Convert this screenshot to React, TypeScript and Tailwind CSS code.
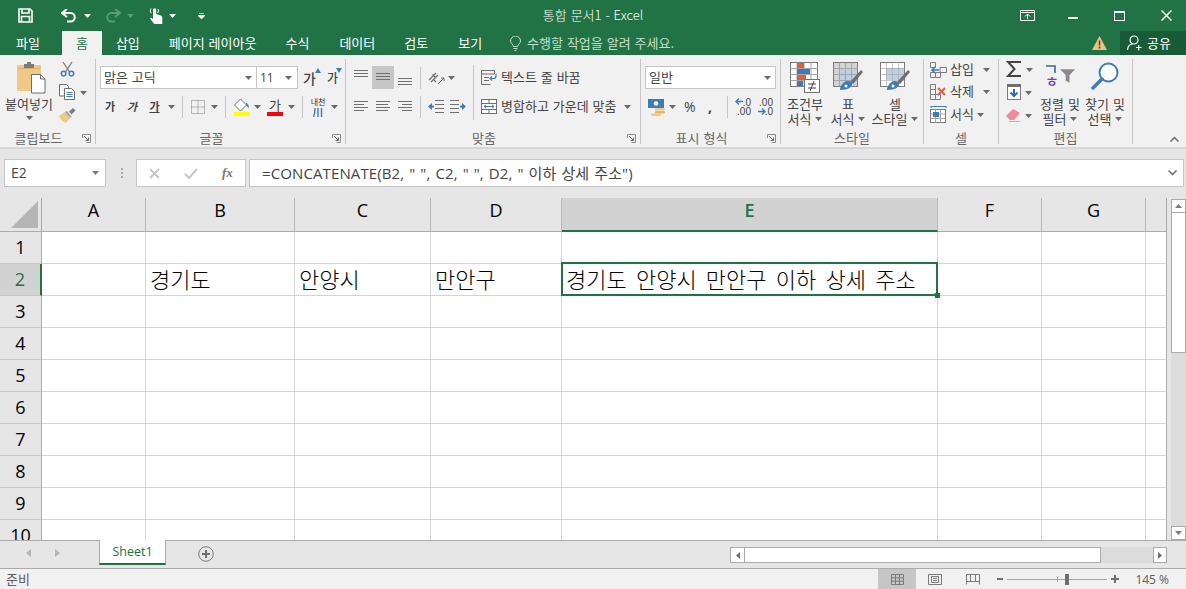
import type { ReactNode } from 'react';

const cols = [
  { label: 'A', w: 'w-[104px]' },
  { label: 'B', w: 'w-[149px]' },
  { label: 'C', w: 'w-[136px]' },
  { label: 'D', w: 'w-[131px]' },
  { label: 'E', w: 'w-[376px]' },
  { label: 'F', w: 'w-[104px]' },
  { label: 'G', w: 'w-[104px]' },
];

const rowNumbers = [1, 2, 3, 4, 5, 6, 7, 8, 9, 10];

const tabs = [
  { label: '파일', cls: 'ml-[2px]' },
  { label: '홈', cls: 'ml-[8px] bg-[#f1f1f1] !text-[#217346]' },
  { label: '삽입', cls: '' },
  { label: '페이지 레이아웃', cls: 'ml-[1px]' },
  { label: '수식', cls: 'ml-[1px]' },
  { label: '데이터', cls: 'ml-[2px]' },
  { label: '검토', cls: 'ml-[1px]' },
  { label: '보기', cls: 'ml-[2px]' },
];

const cellText: Record<string, string> = {
  B2: '경기도',
  C2: '안양시',
  D2: '만안구',
  E2: '경기도 안양시 만안구 이하 상세 주소',
};

function Caret({ className = '', color = '#6a6a6a' }: { className?: string; color?: string }) {
  return (
    <svg width="7" height="4" viewBox="0 0 7 4" className={`shrink-0 ${className}`}>
      <path d="M0 0h7L3.5 4z" fill={color} />
    </svg>
  );
}

function Launcher() {
  return (
    <svg width="9" height="9" viewBox="0 0 9 9">
      <path d="M.5 4V.5H8.5V8.5H4.5" fill="none" stroke="#8a8a8a" />
      <path d="M2 2l4.5 4.5M6.5 3.5v3h-3" fill="none" stroke="#6a6a6a" />
    </svg>
  );
}

function Group({ width, label, launcher, children }: { width: string; label: string; launcher?: boolean; children: ReactNode }) {
  return (
    <section className={`${width} h-[85px] mt-[4px] shrink-0 flex flex-col border-r border-[#c6c6c6]`}>
      <div className="h-[71px]">{children}</div>
      <div className="h-[14px] flex items-center text-[#666666] leading-[14px]">
        <span className="flex-1 text-center pt-[2px]">{label}</span>
        {launcher && (
          <span className="w-[18px] pl-[5px] pt-[3px]">
            <Launcher />
          </span>
        )}
      </div>
    </section>
  );
}

function Sep({ className = '' }: { className?: string }) {
  return <div className={`w-px h-[22px] bg-[#c6c6c6] shrink-0 ${className}`} />;
}

function HLines({ lines }: { lines: [number, number][] }) {
  return (
    <svg width="14" height="23" viewBox="0 0 14 23" className="mx-auto">
      {lines.map(([y, x2], i) => (
        <path key={i} d={`M${x2 < 0 ? 14 + x2 : 0} ${y + 0.5}H${x2 < 0 ? 14 : x2}`} stroke="#6f6f6f" />
      ))}
    </svg>
  );
}

function BigButton({ width, icon, top, bottom }: { width: string; icon: ReactNode; top: string; bottom: string }) {
  return (
    <div className={`${width} flex flex-col items-center pt-[3px]`}>
      <div className="h-[34px] flex items-start justify-center">{icon}</div>
      <div className="leading-[15px] whitespace-nowrap">{top}</div>
      <div className="leading-[15px] flex items-center gap-[4px] whitespace-nowrap">
        {bottom}
        <Caret />
      </div>
    </div>
  );
}

function SmallRow({ height, icon, label, caretCls }: { height: string; icon: ReactNode; label: string; caretCls: string }) {
  return (
    <div className={`${height} flex items-center pl-[6px]`}>
      {icon}
      <span className="ml-[3px]">{label}</span>
      <Caret className={caretCls} />
    </div>
  );
}

function SaveIcon() {
  return (
    <svg width="15" height="15" viewBox="0 0 15 15">
      <path d="M1 1h11l2 2v11H1z" fill="none" stroke="#fff" strokeWidth="1.6" />
      <path d="M4 1v4h7V1M3.5 14V8.5h8V14" fill="none" stroke="#fff" strokeWidth="1.6" />
    </svg>
  );
}

function UndoIcon({ color = '#fff' }: { color?: string }) {
  return (
    <svg width="15" height="14" viewBox="0 0 15 14">
      <path d="M2 4h7.5a4 4 0 0 1 0 8.5H6" fill="none" stroke={color} strokeWidth="2" />
      <path d="M6 0L1 4l5 4" fill="none" stroke={color} strokeWidth="2" />
    </svg>
  );
}

function UndoIconFlipped() {
  return (
    <div className="-scale-x-100">
      <UndoIcon color="#5d9a78" />
    </div>
  );
}

function TouchIcon() {
  return (
    <svg width="14" height="18" viewBox="0 0 14 18">
      <path d="M4 7.5V2.8a1.6 1.6 0 0 1 3.2 0V7l4.5 1.4c1 .3 1.6 1.1 1.6 2.1V17H5.2L1 11.500l1-1 2 1.500z" fill="#fff" />
      <path d="M2.3 6.3A3.8 3.8 0 0 1 2 1.5M8.7 6a3.8 3.8 0 0 0 .3-4" fill="none" stroke="#fff" />
    </svg>
  );
}

function PasteIcon() {
  return (
    <svg width="29" height="32" viewBox="0 0 29 32">
      <rect x="0" y="3" width="24" height="26" rx="1" fill="#f0c987" />
      <rect x="7" y="2" width="10" height="4" fill="#7b7b7b" />
      <rect x="10" y="0" width="4" height="3" fill="#7b7b7b" />
      <rect x="1" y="6" width="22" height="1" fill="#d8b36e" />
      <path d="M14.5 12.5h9l4.500 4.500v14H14.500z" fill="#fff" stroke="#6f6f6f" />
      <path d="M23.500 12.500V17H28" fill="none" stroke="#6f6f6f" />
    </svg>
  );
}

function ScissorsIcon() {
  return (
    <svg width="15" height="16" viewBox="0 0 15 16">
      <path d="M3 1l6.500 10M12 1L5.500 11" fill="none" stroke="#7b7b7b" strokeWidth="1.300" />
      <circle cx="3.600" cy="12.600" r="2.300" fill="none" stroke="#3f7cb5" strokeWidth="1.500" />
      <circle cx="11.400" cy="12.600" r="2.300" fill="none" stroke="#3f7cb5" strokeWidth="1.500" />
    </svg>
  );
}

function CopyIcon() {
  return (
    <svg width="16" height="16" viewBox="0 0 16 16">
      <path d="M.5.5h7l2 2V4M.5.5V12H5" fill="#fff" stroke="#6f6f6f" />
      <path d="M5.500 4.500h7l3 3v8h-10z" fill="#fff" stroke="#6f6f6f" />
      <path d="M7.500 8.500h6M7.500 10.500h6M7.500 12.500h6" stroke="#3f7cb5" />
    </svg>
  );
}

function BrushIcon() {
  return (
    <svg width="17" height="15" viewBox="0 0 17 15">
      <path d="M0 8l6-4 5 6-4 5C4 14 1 11 0 8z" fill="#f0c987" />
      <path d="M6 4l5 6 1.500-1.500L8 3z" fill="#a4a4a4" />
      <path d="M10 3.500l4-3.500 2.500 2.500-4 4z" fill="#7b7b7b" />
    </svg>
  );
}

function BorderIcon() {
  return (
    <svg width="14" height="14" viewBox="0 0 14 14">
      <path d="M.5.5h13v13H.5zM7 .5v13M.5 7h13" fill="none" stroke="#7b7b7b" strokeDasharray="1 1" />
    </svg>
  );
}

function FillIcon() {
  return (
    <svg width="17" height="18" viewBox="0 0 17 18">
      <path d="M1.500 7l6-6 6 6-6 6z" fill="#fff" stroke="#6f6f6f" />
      <path d="M13 4.500c2 1 3 3 3 5.500l-2.500-2z" fill="#3f7cb5" />
      <rect x="1" y="14" width="16" height="4" fill="#ffff00" />
    </svg>
  );
}

function PhoneticIcon() {
  return (
    <div className="w-[16px] flex flex-col items-center leading-none">
      <span className="text-[8px] leading-[10px] text-[#333] whitespace-nowrap">내천</span>
      <svg width="10" height="9" viewBox="0 0 10 9" className="mt-[1px]">
        <path d="M2 0C2 4 2 6 .5 9M5 0v9M8.500 0v9" fill="none" stroke="#3f7cb5" strokeWidth="1.400" />
      </svg>
    </div>
  );
}

function OrientIcon() {
  return (
    <svg width="18" height="16" viewBox="0 0 18 16">
      <path d="M1 10l7-7M3 12l7-7M5 9l3 3M4.500 4.500l3 3" fill="none" stroke="#6f6f6f" strokeWidth="1.200" />
      <path d="M10 14L16 8M16 8h-3M16 8v3" fill="none" stroke="#6f6f6f" />
    </svg>
  );
}

function IndentIcon({ flip }: { flip?: boolean }) {
  return (
    <svg width="16" height="13" viewBox="0 0 16 13" className={flip ? '-scale-x-100' : ''}>
      <path d="M7 .5h9M7 4.500h9M7 8.500h9M7 12.500h9" stroke="#6f6f6f" />
      <path d="M0 6.500L4 3v2.500h2v2H4V10z" fill="#3f7cb5" />
    </svg>
  );
}

function WrapIcon() {
  return (
    <svg width="16" height="15" viewBox="0 0 16 15">
      <path d="M.5.5h13v3.500H.5zM.5 4v10.500h9" fill="none" stroke="#6f6f6f" />
      <path d="M3 7.500h5M3 10.500h5" stroke="#6f6f6f" />
      <path d="M15 3.500v2.500a2.500 2.500 0 0 1-2.500 2.500H9M11 6.500l-2 2 2 2" fill="none" stroke="#3f7cb5" strokeWidth="1.200" />
    </svg>
  );
}

function MergeIcon() {
  return (
    <svg width="16" height="15" viewBox="0 0 16 15">
      <rect x=".5" y=".5" width="15" height="14" fill="#fff" stroke="#6f6f6f" />
      <path d="M.5 4.500h15M.5 10.500h15M8 .5v4M8 10.500v4" stroke="#6f6f6f" />
      <path d="M3 7.500h10M5 5.800l-2 1.700 2 1.700M11 5.800l2 1.700-2 1.700" fill="none" stroke="#3f7cb5" />
    </svg>
  );
}

function CurrencyIcon() {
  return (
    <svg width="17" height="17" viewBox="0 0 17 17">
      <rect x="0" y="0" width="16" height="9" fill="#3f7cb5" />
      <circle cx="8" cy="4.500" r="2.300" fill="#fff" />
      <rect x="7" y="9" width="10" height="2.500" rx="1" fill="#f0c987" />
      <rect x="7" y="12" width="10" height="2.500" rx="1" fill="#e8b566" />
      <rect x="3" y="14.500" width="10" height="2.500" rx="1" fill="#f0c987" />
    </svg>
  );
}

function DecimalIcon({ top, bottom, dir }: { top: string; bottom: string; dir: 'left' | 'right' }) {
  return (
    <div className="w-[16px] relative text-[10px] leading-[9px] text-[#444] text-right font-['Liberation_Sans',sans-serif]">
      <div>{top}</div>
      <div>{bottom}</div>
      <svg width="8" height="7" viewBox="0 0 8 7" className={`absolute ${dir === 'left' ? 'left-0 top-0' : 'left-[1px] top-[10px]'}`}>
        {dir === 'left' ? (
          <path d="M8 3.500H1M4 .5l-3 3 3 3" fill="none" stroke="#3f7cb5" strokeWidth="1.400" />
        ) : (
          <path d="M0 3.500h7M4 .5l3 3-3 3" fill="none" stroke="#3f7cb5" strokeWidth="1.400" />
        )}
      </svg>
    </div>
  );
}

function CondFormatIcon() {
  return (
    <svg width="30" height="31" viewBox="0 0 30 31">
      <rect x=".5" y=".5" width="27" height="24" fill="#fff" stroke="#7b7b7b" />
      <path d="M7 .5v24M14 .5v24M21 .5v24M.5 6.500h27M.5 12.500h27M.5 18.500h27" stroke="#a4a4a4" />
      <rect x="7" y="1" width="7" height="5" fill="#e0603f" />
      <rect x="7" y="7" width="13" height="5" fill="#3f7cb5" />
      <rect x="7" y="13" width="9" height="5" fill="#e0603f" />
      <rect x="7" y="19" width="6" height="5" fill="#3f7cb5" />
      <rect x="14.500" y="17.500" width="15" height="13" fill="#fff" stroke="#6f6f6f" />
      <path d="M18 22h8M18 26h8M20 29l4-10" stroke="#444" />
    </svg>
  );
}

function TableBrushIcon({ header }: { header?: boolean }) {
  return (
    <svg width="30" height="30" viewBox="0 0 30 30">
      <rect x=".5" y=".5" width="24" height="24" fill={header ? '#fff' : '#d4d4d4'} stroke="#7b7b7b" />
      <rect x={header ? 6 : 7} y={header ? 6 : 7} width={header ? 18 : 17} height={header ? 12 : 17} fill="#bcd1e6" />
      <path d="M6.500 .5v24M12.500 .5v24M18.500 .5v24M.5 6.500h24M.5 12.500h24M.5 18.500h24" stroke="#a4a4a4" strokeWidth={header ? 0.6 : 1} />
      <path d="M17 20L28 8l2 2-10 12z" fill="#6f6f6f" />
      <path d="M7 28c0-4 3-8 7-9 3-.5 5 1 5 3 0 3-4 6-12 6z" fill="#3f7cb5" />
      <circle cx="13" cy="24" r="1.500" fill="#fff" />
    </svg>
  );
}

function InsertCellIcon() {
  return (
    <svg width="17" height="16" viewBox="0 0 17 16">
      <path d="M.5.5h5v5h-5zM.5 10.500h5v5h-5zM5.500 10.500h5v5h-5zM10 5.500h6.500v5H10z" fill="none" stroke="#7b7b7b" />
      <path d="M9 8H2M5 5L2 8l3 3" fill="none" stroke="#3f7cb5" strokeWidth="1.600" />
    </svg>
  );
}

function DeleteCellIcon() {
  return (
    <svg width="17" height="16" viewBox="0 0 17 16">
      <path d="M.5.5h5v5h-5zM.5 10.500h5v5h-5zM5.500 10.500h5v5h-5zM.5 5.500h5v5h-5z" fill="none" stroke="#7b7b7b" />
      <path d="M8 4l7 7M15 4l-7 7" stroke="#e0603f" strokeWidth="2" />
    </svg>
  );
}

function FormatCellIcon() {
  return (
    <svg width="17" height="17" viewBox="0 0 17 17">
      <path d="M1 .5h15M1 0v2M16 0v2" stroke="#3f7cb5" />
      <rect x=".5" y="3.500" width="15" height="13" fill="#fff" stroke="#7b7b7b" />
      <path d="M5.500 3.500v13M10.500 3.500v13M.5 8h15M.5 12.500h15" stroke="#a4a4a4" />
      <rect x="3" y="6" width="6" height="5" fill="#3f7cb5" />
    </svg>
  );
}

function SigmaIcon() {
  return (
    <svg width="16" height="16" viewBox="0 0 16 16">
      <path d="M15 1H2l6.500 7L2 15h13" fill="none" stroke="#444" strokeWidth="2" />
    </svg>
  );
}

function FillDownIcon() {
  return (
    <svg width="14" height="16" viewBox="0 0 14 16">
      <rect x=".5" y=".5" width="13" height="15" fill="#fff" stroke="#7b7b7b" />
      <rect x="0" y="0" width="14" height="3" fill="#6f6f6f" />
      <path d="M7 5v7M3.500 8.500L7 12l3.500-3.500" fill="none" stroke="#2f6ea8" strokeWidth="2" />
    </svg>
  );
}

function EraserIcon() {
  return (
    <svg width="15" height="14" viewBox="0 0 15 14">
      <path d="M0 8l7-7 7 4-6 7H4z" fill="#ee8a96" />
      <path d="M3 14h11" stroke="#7b7b7b" />
    </svg>
  );
}

function SortFilterIcon() {
  return (
    <div className="w-[30px] h-[24px] mt-[3px] flex items-start">
      <div className="w-[14px] text-[#7a3fa5] text-[15px] font-medium leading-[14px] flex flex-col items-center">
        <svg width="11" height="8" viewBox="0 0 11 8">
          <path d="M0 1h9v7" fill="none" stroke="#2f6ea8" strokeWidth="1.600" />
        </svg>
        <span className="mt-[1px]">ㅎ</span>
      </div>
      <svg width="16" height="14" viewBox="0 0 16 14" className="mt-[4px] ml-[1px]">
        <path d="M0 0h16L10 6v8l-4-2V6z" fill="#8a8a8a" />
      </svg>
    </div>
  );
}

function SearchIcon() {
  return (
    <svg width="28" height="28" viewBox="0 0 28 28">
      <circle cx="17.500" cy="10.500" r="9" fill="#fff" stroke="#3f7cb5" strokeWidth="2" />
      <path d="M11 17L2 26" stroke="#3f7cb5" strokeWidth="3.500" strokeLinecap="round" />
    </svg>
  );
}

function TitleBar() {
  return (
    <header className="h-[31px] grid grid-cols-[1fr_auto_1fr] items-center text-white">
      <div className="flex items-center">
        <div className="ml-[18px]"><SaveIcon /></div>
        <div className="ml-[28px]"><UndoIcon /></div>
        <Caret className="ml-[8px]" color="#fff" />
        <div className="ml-[15px]"><UndoIconFlipped /></div>
        <Caret className="ml-[6px]" color="#5d9a78" />
        <div className="ml-[15px]"><TouchIcon /></div>
        <Caret className="ml-[6px]" color="#fff" />
        <svg width="7" height="6" viewBox="0 0 7 6" className="ml-[22px]">
          <path d="M1 .5h5M0 2.500h7L3.500 6z" fill="#fff" stroke="#fff" strokeWidth=".6" />
        </svg>
      </div>
      <div className="text-[13px] font-light">통합 문서1 - Excel</div>
      <div className="flex items-center justify-end">
        <svg width="15" height="11" viewBox="0 0 15 11">
          <path d="M.5.5h14v10H.500zM.5 2.500h14" fill="none" stroke="#fff" />
          <path d="M7.500 9V4.500M5 6.500l2.500-2.500L10 6.500" fill="none" stroke="#fff" />
        </svg>
        <div className="w-[10px] h-[2px] bg-white ml-[33px] mt-[4px]" />
        <div className="w-[11px] h-[10px] border border-white border-t-2 ml-[36px]" />
        <svg width="11" height="11" viewBox="0 0 11 11" className="ml-[36px] mr-[14px]">
          <path d="M.5.500l10 10M10.500.500l-10 10" stroke="#fff" strokeWidth="1.500" />
        </svg>
      </div>
    </header>
  );
}

function TabBar() {
  return (
    <nav className="h-[24px] flex items-stretch text-white">
      {tabs.map((t) => (
        <div key={t.label} className={`px-[14px] leading-[24px] whitespace-nowrap ${t.cls}`}>
          {t.label}
        </div>
      ))}
      <div className="ml-[14px] flex items-center text-[#c4dfce]">
        <svg width="11" height="15" viewBox="0 0 11 15">
          <path d="M3.500 10.500C3 8 .5 7.500.5 5a5 5 0 0 1 10 0c0 2.500-2.500 3-3 5.500z" fill="none" stroke="#c4dfce" />
          <path d="M3.500 12.500h4M4.500 14.500h2" stroke="#c4dfce" />
        </svg>
        <span className="ml-[6px]">수행할 작업을 알려 주세요.</span>
      </div>
      <div className="ml-auto flex items-center">
        <svg width="15" height="14" viewBox="0 0 15 14">
          <path d="M7.500 0L15 14H0z" fill="#eec27d" />
          <path d="M7.500 4.500v5M7.500 10.500v2" stroke="#444" strokeWidth="1.500" />
        </svg>
        <div className="ml-[13px] w-[66px] h-full bg-[#185c37] flex items-center pl-[7px]">
          <svg width="15" height="16" viewBox="0 0 15 16">
            <circle cx="7" cy="5" r="4" fill="none" stroke="#fff" strokeWidth="1.200" />
            <path d="M.5 15c.3-3.500 2.500-6 5.500-6.500M9 12.500h5.500M11.700 10v5.500" fill="none" stroke="#fff" strokeWidth="1.200" />
          </svg>
          <span className="ml-[5px]">공유</span>
        </div>
      </div>
    </nav>
  );
}

function Ribbon() {
  return (
    <div className="h-[94px] bg-[#f1f1f1] border-b-2 border-[#d6d6d6] flex text-[#444444] shrink-0">
      <Group width="w-[96px]" label="클립보드" launcher>
        <div className="flex">
          <div className="w-[58px] flex flex-col items-center pt-[3px]">
            <div className="h-[34px] ml-[4px]"><PasteIcon /></div>
            <div className="leading-[15px]">붙여넣기</div>
            <Caret className="mt-[5px]" />
          </div>
          <div className="flex flex-col pt-[2px]">
            <div className="ml-[2px] h-[23px]"><ScissorsIcon /></div>
            <div className="ml-[1px] h-[24px] flex items-start">
              <CopyIcon />
              <Caret className="ml-[5px] mt-[7px]" />
            </div>
            <div className="ml-[1px]"><BrushIcon /></div>
          </div>
        </div>
      </Group>

      <Group width="w-[250px]" label="글꼴" launcher>
        <div className="flex items-center pl-[4px] pt-[7px]">
          <div className="w-[198px] h-[23px] bg-white border border-[#c6c6c6] flex">
            <div className="w-[156px] border-r border-[#c6c6c6] flex items-center justify-between pl-[3px] pr-[4px]">
              <span>맑은 고딕</span>
              <Caret />
            </div>
            <div className="flex-1 flex items-center justify-between pl-[3px] pr-[5px]">
              <span className="font-['Open_Sans',sans-serif] text-[12px]">11</span>
              <Caret />
            </div>
          </div>
          <div className="ml-[5px] w-[16px] relative text-[14px] leading-none font-medium">
            가
            <svg width="6" height="5" viewBox="0 0 6 5" className="absolute -right-[2px] -top-[3px]"><path d="M3 0l3 5H0z" fill="#3f7cb5" /></svg>
          </div>
          <div className="ml-[8px] w-[14px] relative text-[12px] leading-none font-medium">
            가
            <svg width="6" height="5" viewBox="0 0 6 5" className="absolute -right-[1px] -top-[4px]"><path d="M0 0h6L3 5z" fill="#3f7cb5" /></svg>
          </div>
        </div>
        <div className="h-[24px] mt-[6px] flex items-center pl-[3px]">
          <span className="w-[22px] text-center text-[11px] font-bold">가</span>
          <span className="w-[22px] text-center text-[11px] font-bold italic">가</span>
          <span className="w-[23px] text-center text-[11px] font-bold underline">가</span>
          <Caret className="ml-[2px]" />
          <Sep className="ml-[7px]" />
          <div className="ml-[8px]"><BorderIcon /></div>
          <Caret className="ml-[6px]" />
          <Sep className="ml-[7px]" />
          <div className="ml-[7px]"><FillIcon /></div>
          <Caret className="ml-[4px]" />
          <div className="ml-[6px] w-[16px] flex flex-col items-center">
            <span className="text-[13px] leading-[14px]">가</span>
            <div className="w-[16px] h-[4px] bg-[#ff0000]" />
          </div>
          <Caret className="ml-[5px]" />
          <Sep className="ml-[7px]" />
          <div className="ml-[7px]"><PhoneticIcon /></div>
          <Caret className="ml-[5px]" />
        </div>
      </Group>

      <Group width="w-[295px]" label="맞춤" launcher>
        <div className="flex pt-[6px]">
          <div className="w-[127px]">
            <div className="h-[23px] flex items-center pl-[4px] mt-[1px]">
              <div className="w-[22px]"><HLines lines={[[4, 14], [7, 14], [10, 14]]} /></div>
              <div className="w-[22px] bg-[#c6c6c6]"><HLines lines={[[7, 14], [10, 14], [13, 14]]} /></div>
              <div className="w-[22px]"><HLines lines={[[12, 14], [15, 14], [18, 14]]} /></div>
              <Sep className="ml-[4px]" />
              <div className="ml-[7px]"><OrientIcon /></div>
              <Caret className="ml-[2px]" />
            </div>
            <div className="h-[23px] mt-[6px] flex items-center pl-[4px]">
              <div className="w-[22px]"><HLines lines={[[6, 14], [9, 10], [12, 14], [15, 10]]} /></div>
              <div className="w-[22px]"><HLines lines={[[6, 14], [9, 12], [12, 14], [15, 12]]} /></div>
              <div className="w-[22px]"><HLines lines={[[6, 14], [9, -10], [12, 14], [15, -10]]} /></div>
              <Sep className="ml-[4px]" />
              <div className="ml-[7px]"><IndentIcon /></div>
              <div className="ml-[6px]"><IndentIcon flip /></div>
            </div>
          </div>
          <div className="w-px h-[55px] bg-[#c6c6c6]" />
          <div className="pl-[7px]">
            <div className="h-[23px] mt-[1px] flex items-center">
              <WrapIcon />
              <span className="ml-[4px]">텍스트 줄 바꿈</span>
            </div>
            <div className="h-[23px] mt-[6px] flex items-center">
              <MergeIcon />
              <span className="ml-[4px]">병합하고 가운데 맞춤</span>
              <Caret className="ml-[8px]" />
            </div>
          </div>
        </div>
      </Group>

      <Group width="w-[140px]" label="표시 형식" launcher>
        <div className="pt-[7px] pl-[4px]">
          <div className="w-[131px] h-[23px] bg-white border border-[#c6c6c6] flex items-center justify-between pl-[3px] pr-[4px]">
            <span>일반</span>
            <Caret />
          </div>
        </div>
        <div className="h-[24px] mt-[6px] flex items-center">
          <div className="ml-[7px]"><CurrencyIcon /></div>
          <Caret className="ml-[4px]" />
          <span className="ml-[8px] w-[13px] text-[14px] font-['Open_Sans',sans-serif]">%</span>
          <span className="ml-[11px] w-[6px] text-[14px] font-bold font-['Open_Sans',sans-serif] leading-[14px]">,</span>
          <Sep className="ml-[13px]" />
          <div className="ml-[7px]"><DecimalIcon top=".0" bottom=".00" dir="left" /></div>
          <div className="ml-[6px]"><DecimalIcon top=".00" bottom=".0" dir="right" /></div>
        </div>
      </Group>

      <Group width="w-[143px]" label="스타일">
        <div className="flex">
          <BigButton width="w-[48px]" icon={<CondFormatIcon />} top="조건부" bottom="서식" />
          <BigButton width="w-[38px]" icon={<TableBrushIcon />} top="표" bottom="서식" />
          <BigButton width="w-[56px]" icon={<TableBrushIcon header />} top="셀" bottom="스타일" />
        </div>
      </Group>

      <Group width="w-[75px]" label="셀">
        <SmallRow height="h-[21px]" icon={<InsertCellIcon />} label="삽입" caretCls="ml-[9px]" />
        <SmallRow height="h-[23px]" icon={<DeleteCellIcon />} label="삭제" caretCls="ml-[9px]" />
        <SmallRow height="h-[23px]" icon={<FormatCellIcon />} label="서식" caretCls="ml-[3px]" />
      </Group>

      <Group width="w-[134px]" label="편집">
        <div className="flex">
          <div className="w-[39px] flex flex-col pl-[7px] pt-[2px]">
            <div className="h-[23px] flex items-start"><SigmaIcon /><Caret className="ml-[4px] mt-[7px]" /></div>
            <div className="h-[24px] flex items-start"><div className="ml-[1px]"><FillDownIcon /></div><Caret className="ml-[4px] mt-[7px]" /></div>
            <div className="flex items-start"><EraserIcon /><Caret className="ml-[4px] mt-[6px]" /></div>
          </div>
          <BigButton width="w-[44px]" icon={<SortFilterIcon />} top="정렬 및" bottom="필터" />
          <BigButton width="w-[46px]" icon={<SearchIcon />} top="찾기 및" bottom="선택" />
        </div>
      </Group>

      <div className="flex-1 flex justify-end items-end pb-[5px] pr-[7px]">
        <svg width="9" height="6" viewBox="0 0 9 6"><path d="M.5 5.500l4-4 4 4" fill="none" stroke="#6a6a6a" strokeWidth="1.500" /></svg>
      </div>
    </div>
  );
}

function FormulaBar() {
  return (
    <div className="h-[49px] flex items-start pt-[10px] shrink-0 text-[#444444]">
      <div className="ml-[4px] w-[102px] h-[28px] bg-white border border-[#c6c6c6] flex items-center justify-between pl-[6px] pr-[6px] text-[14px] font-['Open_Sans',sans-serif]">
        <span>E2</span>
        <Caret color="#7b7b7b" />
      </div>
      <div className="ml-[15px] h-[28px] flex flex-col justify-center gap-[2px]">
        {[0, 1, 2].map((i) => <div key={i} className="w-[2px] h-[2px] bg-[#a4a4a4]" />)}
      </div>
      <div className="ml-[13px] w-[110px] h-[28px] bg-white border border-[#c6c6c6] flex items-center">
        <svg width="11" height="11" viewBox="0 0 11 11" className="ml-[12px]"><path d="M1 1l9 9M10 1l-9 9" stroke="#c6c6c6" strokeWidth="1.800" /></svg>
        <svg width="14" height="11" viewBox="0 0 14 11" className="ml-[24px]"><path d="M1 6l4 4 8-9" fill="none" stroke="#c6c6c6" strokeWidth="2" /></svg>
        <span className="ml-[24px] text-[13px] italic font-bold text-[#777] font-['Liberation_Serif',serif]">fx</span>
      </div>
      <div className="ml-[3px] w-[935px] h-[28px] bg-white border border-[#c6c6c6] flex items-center pl-[12px] pr-[6px] justify-between text-[15px] tracking-[0.11px] whitespace-nowrap font-['Open_Sans','Noto_Sans_CJK_KR',sans-serif]">
        <span>=CONCATENATE(B2, " ", C2, " ", D2, " 이하 상세 주소")</span>
        <svg width="9" height="6" viewBox="0 0 9 6"><path d="M.5.500l4 4 4-4" fill="none" stroke="#6a6a6a" strokeWidth="1.500" /></svg>
      </div>
    </div>
  );
}

function Sheet() {
  return (
    <div className="w-[1168px] h-[342px] overflow-hidden shrink-0 flex flex-col">
      <div className="flex h-[34px] shrink-0">
        <div className="w-[42px] h-[34px] border-b border-r border-[#ababab] pl-[11px] pt-[3px]">
          <svg width="27" height="27" viewBox="0 0 27 27"><path d="M27 0v27H0z" fill="#b5b5b5" /></svg>
        </div>
        {cols.map((c) => {
          const active = c.label === 'E';
          return (
            <div
              key={c.label}
              className={`${c.w} text-center text-[18px] leading-[24px] border-r border-[#b9b9b9] ${
                active ? 'bg-[#d2d2d2] text-[#217346] font-semibold border-b-2 border-b-[#217346]' : 'border-b border-b-[#ababab] text-black'
              }`}
            >
              {c.label}
            </div>
          );
        })}
        <div className="w-[21px] border-b border-r border-[#ababab]" />
      </div>
      {rowNumbers.map((r) => (
        <div key={r} className="flex h-[32px] shrink-0">
          <div
            className={`w-[42px] text-center text-[18px] leading-[31px] border-b border-[#c6c6c6] ${
              r === 2 ? 'bg-[#d2d2d2] text-[#217346] border-r-2 border-r-[#217346]' : 'border-r border-r-[#ababab] text-black'
            }`}
          >
            {r}
          </div>
          {cols.map((c) => {
            const id = `${c.label}${r}`;
            return (
              <div
                key={id}
                className={`${c.w} relative ${id === 'E2' ? 'z-10' : ''} bg-white border-b border-r border-[#d4d4d4] pl-[4px] text-[22px] font-light leading-[30px] text-black whitespace-nowrap [word-spacing:3.5px]`}
              >
                {cellText[id]}
                {id === 'E2' && (
                  <div className="absolute -left-[1px] -top-[2px] -right-[1px] -bottom-[1px] border-2 border-[#217346]">
                    <div className="absolute -right-[4px] -bottom-[4px] w-[5px] h-[5px] bg-[#217346]" />
                  </div>
                )}
              </div>
            );
          })}
          <div className="w-[21px] bg-white border-b border-r border-b-[#d4d4d4] border-r-[#ababab]" />
        </div>
      ))}
    </div>
  );
}

function VScroll() {
  return (
    <div className="ml-[3px] w-[15px] h-[342px] pt-[1px] flex flex-col">
      <div className="h-[14px] bg-white border border-[#ababab] flex items-center justify-center">
        <svg width="7" height="4" viewBox="0 0 7 4"><path d="M3.500 0L7 4H0z" fill="#7b7b7b" /></svg>
      </div>
      <div className="h-[140px] bg-white border border-t-0 border-[#ababab]" />
      <div className="flex-1 bg-[#dcdcdc]" />
      <div className="h-[14px] bg-white border border-[#ababab] flex items-center justify-center">
        <Caret color="#7b7b7b" />
      </div>
    </div>
  );
}

function SheetTabs() {
  return (
    <div className="h-[29px] flex border-t border-[#ababab] border-b border-b-[#ababab] shrink-0">
      <div className="w-[99px] flex items-center pb-[3px]">
        <svg width="5" height="8" viewBox="0 0 5 8" className="ml-[26px]"><path d="M5 0v8L0 4z" fill="#b5b5b5" /></svg>
        <svg width="5" height="8" viewBox="0 0 5 8" className="ml-[24px]"><path d="M0 0v8l5-4z" fill="#b5b5b5" /></svg>
      </div>
      <div className="-mt-px w-[67px] h-[25px] bg-white border-x border-[#ababab] border-b-2 border-b-[#217346] text-center text-[#217346] text-[12.5px] leading-[24px] font-['Open_Sans',sans-serif]">
        Sheet1
      </div>
      <div className="ml-[32px] pt-[5px]">
        <svg width="16" height="16" viewBox="0 0 16 16">
          <circle cx="8" cy="8" r="7.300" fill="none" stroke="#7b7b7b" />
          <path d="M8 4v8M4 8h8" stroke="#6f6f6f" strokeWidth="2" />
        </svg>
      </div>
      <div className="ml-[516px] mt-[6px] flex h-[16px]">
        <div className="w-[15px] bg-white border border-[#ababab] flex items-center justify-center">
          <svg width="4" height="7" viewBox="0 0 4 7"><path d="M4 0v7L0 3.500z" fill="#6f6f6f" /></svg>
        </div>
        <div className="w-[356px] bg-white border-y border-r border-[#ababab]" />
        <div className="w-[52px] bg-[#dcdcdc]" />
        <div className="w-[14px] bg-white border border-[#ababab] flex items-center justify-center">
          <svg width="4" height="7" viewBox="0 0 4 7"><path d="M0 0v7l4-3.500z" fill="#6f6f6f" /></svg>
        </div>
      </div>
    </div>
  );
}

function StatusBar() {
  return (
    <footer className="flex-1 bg-[#f1f1f1] flex items-center text-[#5c5c5c]">
      <span className="ml-[6px]">준비</span>
      <div className="ml-auto flex items-center h-full">
        <div className="w-[38px] h-full bg-[#c6c6c6] flex items-center justify-center">
          <svg width="13" height="11" viewBox="0 0 13 11"><path d="M.5.500h12v10H.500zM4.500.500v10M8.500.500v10M.5 3.800h12M.5 7.200h12" fill="none" stroke="#7b7b7b" /></svg>
        </div>
        <svg width="14" height="11" viewBox="0 0 14 11" className="ml-[12px]">
          <path d="M.5.500h13v10H.500z" fill="none" stroke="#7b7b7b" />
          <path d="M3.500 2.500h7v6h-7zM5 4.500h4M5 6.500h4" fill="none" stroke="#7b7b7b" />
        </svg>
        <svg width="14" height="11" viewBox="0 0 14 11" className="ml-[24px]">
          <path d="M.5 10.500V.500h13v10M.5 7.500h13M4.500.500v7M9.500.500v7" fill="none" stroke="#7b7b7b" />
        </svg>
        <div className="ml-[17px] w-[6px] h-[2px] bg-[#6f6f6f]" />
        <div className="ml-[4px] w-[100px] h-[9px] flex items-center">
          <div className="w-[50px] h-px bg-[#a4a4a4]" />
          <div className="w-px h-[5px] bg-[#a4a4a4]" />
          <div className="w-[7px] h-px bg-[#a4a4a4]" />
          <div className="w-[4px] h-[11px] bg-[#6f6f6f]" />
          <div className="flex-1 h-px bg-[#a4a4a4]" />
        </div>
        <svg width="8" height="8" viewBox="0 0 8 8" className="ml-[4px]"><path d="M4 0v8M0 4h8" stroke="#6f6f6f" strokeWidth="2" /></svg>
        <span className="ml-[16px] mr-[17px] text-[12px] [word-spacing:0] font-['Open_Sans',sans-serif]">145 %</span>
      </div>
    </footer>
  );
}

export default function App() {
  return (
    <div className="w-[1186px] h-[589px] overflow-hidden flex flex-col bg-[#e6e6e6] text-[13px] leading-tight [word-spacing:1px] font-['Noto_Sans_CJK_KR',sans-serif]">
      <div className="bg-[#217346] shrink-0">
        <TitleBar />
        <TabBar />
      </div>
      <Ribbon />
      <FormulaBar />
      <div className="flex shrink-0 font-['Open_Sans','Noto_Sans_CJK_KR',sans-serif]">
        <Sheet />
        <VScroll />
      </div>
      <SheetTabs />
      <StatusBar />
    </div>
  );
}
